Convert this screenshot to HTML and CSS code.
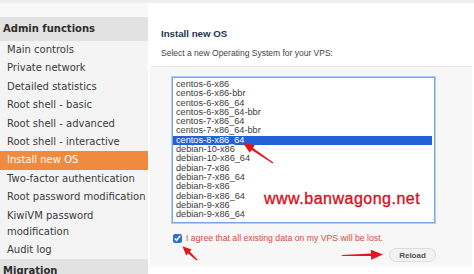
FILE: index.html
```html
<!DOCTYPE html>
<html lang="en">
<head>
  <meta charset="UTF-8">
  <title>KiwiVM - Install new OS</title>
  <link rel="stylesheet" href="styles.css">
</head>
<body>
  <div class="topline"></div>
  <div class="page">
    <div class="sidebar">
      <div class="side-top"></div>
      <div class="side-head">Admin functions</div>
      <div class="side-item">Main controls</div>
      <div class="side-item">Private network</div>
      <div class="side-item">Detailed statistics</div>
      <div class="side-item">Root shell - basic</div>
      <div class="side-item">Root shell - advanced</div>
      <div class="side-item">Root shell - interactive</div>
      <div class="side-item active">Install new OS</div>
      <div class="side-item">Two-factor authentication</div>
      <div class="side-item">Root password modification</div>
      <div class="side-item two-line">KiwiVM password modification</div>
      <div class="side-item">Audit log</div>
      <div class="side-head">Migration</div>
    </div>

    <div class="main">
      <h3>Install new OS</h3>
      <p class="hint">Select a new Operating System for your VPS:</p>
      <div class="panel">
        <div class="listbox">
          <div class="opt">centos-6-x86</div>
          <div class="opt">centos-6-x86-bbr</div>
          <div class="opt">centos-6-x86_64</div>
          <div class="opt">centos-6-x86_64-bbr</div>
          <div class="opt">centos-7-x86_64</div>
          <div class="opt">centos-7-x86_64-bbr</div>
          <div class="opt selected">centos-8-x86_64</div>
          <div class="opt">debian-10-x86</div>
          <div class="opt">debian-10-x86_64</div>
          <div class="opt">debian-7-x86</div>
          <div class="opt">debian-7-x86_64</div>
          <div class="opt">debian-8-x86</div>
          <div class="opt">debian-8-x86_64</div>
          <div class="opt">debian-9-x86</div>
          <div class="opt">debian-9-x86_64</div>
          <div class="watermark">www.banwagong.net</div>
        </div>
        <label class="agree"><input type="checkbox" checked> I agree that all existing data on my VPS will be lost.</label>
        <div class="actions">
          <button class="reload">Reload</button>
        </div>
      </div>
    </div>
  </div>

  <!-- annotation arrows -->
  <svg class="arrows" width="474" height="274" viewBox="0 0 474 274">
    <g fill="#e2171c">
      <polygon transform="translate(273 163) rotate(214.1)" points="0,-0.6 25,-1.3 25,-4.5 37,0 25,4.5 25,1.3 0,0.6"/>
      <polygon transform="translate(197 260) rotate(223)" points="0,-0.6 11,-1.2 11,-4 20,0 11,4 11,1.2 0,0.6"/>
      <polygon transform="translate(342 255.5) rotate(-1.4)" points="0,-0.6 29,-1.3 29,-5 41,0 29,5 29,1.3 0,0.6"/>
    </g>
  </svg>
</body>
</html>
```

FILE: styles.css
```css
html, body { margin: 0; padding: 0; }
body { width: 474px; height: 274px; overflow: hidden; background: #fff; font-family: "DejaVu Sans", Verdana, sans-serif; position: relative; }
.topline { height: 3px; background: #eeeeee; }
.page { display: flex; gap: 2px; }

.sidebar { width: 148px; flex: none; background: #f4f4f4; color: #3a3a3a; font-size: 10px; }
.side-top { height: 14px; background: #f8f8f8; }
.side-head { height: 24px; line-height: 24px; background: #e2e2e2; padding-left: 3px; font-weight: bold; color: #2e2e2e; }
.side-item { height: 18.4px; line-height: 18.4px; padding-left: 7px; white-space: nowrap; }
.side-item.active { background: #ef8a3e; color: #fff; }
.side-item.two-line { height: 34px; line-height: 16px; padding-top: 1px; white-space: normal; width: 120px; box-sizing: border-box; }

.main { flex: 1; font-family: "Liberation Sans", Arial, sans-serif; color: #444; }
.main h3 { margin: 24px 0 0 11px; font-size: 9.7px; line-height: 14px; color: #22344d; }
.hint { margin: 6px 0 0 11px; font-size: 8.5px; line-height: 12px; }
.panel { margin-top: 7px; width: 322px; height: 200px; background: #f7f7f7; border-top: 1px solid #ebebeb; padding: 10px 0 0 22px; box-sizing: border-box; }

.listbox { position: relative; width: 263px; height: 146px; box-sizing: border-box; background: #fff; border: 1px solid #7ba5e1; box-shadow: 0 0 0 1px #b5cdf2; padding: 2px 2px 0 0; font-size: 9.2px; color: #3a3a3a; }
.opt { height: 9.3px; line-height: 9.3px; padding-left: 3px; white-space: nowrap; }
.opt.selected { background: #2362d6; color: #fff; }
.watermark { position: absolute; left: 91px; top: 112px; font-size: 16px; color: #d3121c; -webkit-text-stroke: 0.35px #d3121c; letter-spacing: 0.5px; }

.agree { display: flex; align-items: center; gap: 4px; margin: 10px 0 0 1px; font-size: 8.7px; color: #d64a42; }
.agree input { margin: 0; width: 9px; height: 9px; accent-color: #2b6fd8; }
.actions { display: flex; justify-content: flex-end; width: 264px; margin-top: 5px; }
.reload { height: 14px; width: 47px; padding: 0; border: 1px solid #dddddd; border-radius: 7px; background: #f2f2f2; color: #555; font-family: "Liberation Sans", Arial, sans-serif; font-size: 8px; font-weight: bold; }

.arrows { position: absolute; left: 0; top: 0; pointer-events: none; }
```
